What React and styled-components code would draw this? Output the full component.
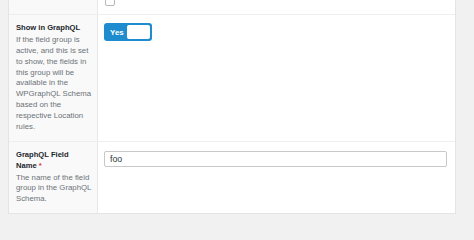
import React from "react";
import styled, { createGlobalStyle } from "styled-components";

const Global = createGlobalStyle`
  html, body { margin: 0; padding: 0; background: #f1f1f1; }
  body { font-family: "Liberation Sans", Arial, sans-serif; -webkit-font-smoothing: antialiased; }
`;

const Page = styled.div`
  padding: 0 18px 9px 8px;
  height: 223px;
  box-sizing: border-box;
  overflow: hidden;
`;

const Panel = styled.div`
  background: #fff;
  border: 1px solid #e2e4e7;
  border-top: none;
`;

const Row = styled.div`
  display: grid;
  grid-template-columns: 89px 1fr;
  border-top: ${(p) => (p.$first ? "none" : "1px solid #eeeeee")};
  height: ${(p) => (p.$height ? p.$height + "px" : "auto")};
  overflow: hidden;
`;

const Label = styled.div`
  background: #f9f9f9;
  border-right: 1px solid #e8e8e8;
  padding: ${(p) => (p.$compact ? "0" : "8px 4px 8px 7px")};
`;

const Title = styled.div`
  font-size: 7.6px;
  line-height: 10.8px;
  font-weight: 700;
  color: #23282d;
  white-space: nowrap;
`;

const Required = styled.span`
  color: #dc3232;
`;

const Desc = styled.div`
  margin-top: 1px;
  font-size: 7.8px;
  line-height: 10.9px;
  color: #6c7278;
  white-space: nowrap;
`;

const Value = styled.div`
  padding: ${(p) => p.$pad || "8px 8px 0 6px"};
  display: flex;
  align-items: flex-start;
  gap: 4px;
`;

const Checkbox = styled.span`
  display: block;
  width: 8px;
  height: 10px;
  margin-top: -6px;
  border: 1px solid #b4b9be;
  border-radius: 2px;
  background: #fff;
`;

const FaintText = styled.span`
  font-size: 8px;
  line-height: 10px;
  margin-top: -7px;
  color: #c8c8c8;
  letter-spacing: 1px;
`;

const Toggle = styled.div`
  width: 48px;
  height: 18px;
  box-sizing: border-box;
  background: #1e8cce;
  border-radius: 3px;
  display: flex;
  align-items: center;
  justify-content: space-between;
  padding: 2px 2px 2px 6px;
`;

const ToggleText = styled.span`
  font-size: 8px;
  font-weight: 700;
  color: #fff;
`;

const Knob = styled.span`
  width: 23px;
  height: 14px;
  background: #fff;
  border-radius: 2px;
`;

const Input = styled.div`
  flex: 1;
  height: 16px;
  box-sizing: border-box;
  border: 1px solid #c8c8c8;
  border-radius: 2px;
  background: #fff;
  padding: 0 5px;
  display: flex;
  align-items: center;
  font-size: 8.8px;
  color: #32373c;
`;

export default function App() {
  return (
    <>
      <Global />
      <Page>
        <Panel>
          <Row $first $height={14}>
            <Label $compact />
            <Value $pad="0 8px 0 7px">
              <Checkbox />
              <FaintText>Active in Schema</FaintText>
            </Value>
          </Row>
          <Row>
            <Label>
              <Title>Show in GraphQL</Title>
              <Desc>
                If the field group is
                <br />
                active, and this is set
                <br />
                to show, the fields in
                <br />
                this group will be
                <br />
                available in the
                <br />
                WPGraphQL Schema
                <br />
                based on the
                <br />
                respective Location
                <br />
                rules.
              </Desc>
            </Label>
            <Value>
              <Toggle>
                <ToggleText>Yes</ToggleText>
                <Knob />
              </Toggle>
            </Value>
          </Row>
          <Row>
            <Label>
              <Title>
                GraphQL Field
                <br />
                Name <Required>*</Required>
              </Title>
              <Desc>
                The name of the field
                <br />
                group in the GraphQL
                <br />
                Schema.
              </Desc>
            </Label>
            <Value $pad="9px 8px 0 6px">
              <Input>foo</Input>
            </Value>
          </Row>
        </Panel>
      </Page>
    </>
  );
}
